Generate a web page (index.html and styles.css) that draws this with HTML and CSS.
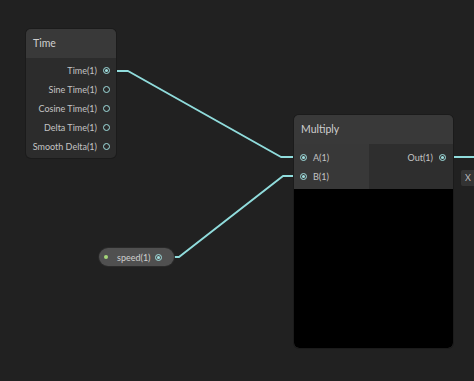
FILE: index.html
```html
<html>
<head>
<meta name="viewport" content="width=device-width, initial-scale=1">
<title>Shader Graph</title>
<link rel="stylesheet" href="styles.css">
</head>
<body>
<div class="canvas">
  <svg class="wires" width="474" height="381" viewBox="0 0 474 381">
    <path d="M110 71 H128 L281 157 H300" />
    <path d="M161 257 H179 L283 176 H300" />
    <path d="M446 157 H474" />
  </svg>

  <div class="node time-node">
    <div class="node-title">Time</div>
    <div class="node-body">
      <div class="slot out"><span>Time(1)</span><i class="port on"></i></div>
      <div class="slot out"><span>Sine Time(1)</span><i class="port"></i></div>
      <div class="slot out"><span>Cosine Time(1)</span><i class="port"></i></div>
      <div class="slot out"><span>Delta Time(1)</span><i class="port"></i></div>
      <div class="slot out"><span>Smooth Delta(1)</span><i class="port"></i></div>
    </div>
  </div>

  <div class="node multiply-node">
    <div class="node-title">Multiply</div>
    <div class="slots">
      <div class="inputs">
        <div class="slot in"><i class="port on"></i><span>A(1)</span></div>
        <div class="slot in"><i class="port on"></i><span>B(1)</span></div>
      </div>
      <div class="outputs">
        <div class="slot out"><span>Out(1)</span><i class="port on"></i></div>
      </div>
    </div>
    <div class="preview"></div>
  </div>

  <div class="property">
    <i class="dot"></i><span>speed(1)</span><i class="port on"></i>
  </div>

  <div class="stub">X</div>
</div>
</body>
</html>
```

FILE: styles.css
```css
html, body {
  margin: 0;
  padding: 0;
  background: #212121;
  overflow: hidden;
}

.canvas {
  position: relative;
  width: 474px;
  height: 381px;
  font-family: Lato, "Noto Sans", sans-serif;
  font-size: 9px;
  color: #c4c4c4;
  white-space: nowrap;
}

.wires {
  position: absolute;
  left: 0;
  top: 0;
}

.wires path {
  fill: none;
  stroke: #90dcdc;
  stroke-width: 2;
  stroke-linejoin: round;
}

.node {
  position: absolute;
  background: #2c2c2c;
  border-radius: 5px;
  box-shadow: 0 0 0 1px #1b1b1b;
  overflow: hidden;
}

.node-title {
  height: 29px;
  line-height: 29px;
  padding-left: 7px;
  background: #393939;
  font-size: 10.5px;
  color: #cfcfcf;
}

.time-node {
  left: 26px;
  top: 29px;
  width: 90px;
  height: 129px;
}

.time-node .node-body {
  padding-top: 3px;
}

.slot {
  display: flex;
  align-items: center;
  height: 19px;
  gap: 6px;
}

.slot.out {
  justify-content: flex-end;
  padding-right: 6px;
}

.slot.in {
  padding-left: 6px;
}

.port {
  flex-shrink: 0;
  display: inline-flex;
  align-items: center;
  justify-content: center;
  box-sizing: border-box;
  width: 7px;
  height: 7px;
  border: 1.5px solid #9fdede;
  border-radius: 50%;
}

.port.on::after {
  content: "";
  width: 3px;
  height: 3px;
  border-radius: 50%;
  background: #9fdede;
}

.multiply-node {
  left: 294px;
  top: 115px;
  width: 159px;
  height: 233px;
  display: flex;
  flex-direction: column;
}

.slots {
  display: flex;
  height: 45px;
}

.inputs {
  width: 75px;
  padding-top: 4px;
  background: #383838;
}

.outputs {
  flex: 1;
  padding-top: 4px;
  background: #2e2e2e;
}

.outputs .slot.out {
  padding-right: 7px;
}

.preview {
  flex: 1;
  background: #000;
  border-radius: 0 0 5px 5px;
}

.property {
  position: absolute;
  left: 99px;
  top: 248px;
  width: 75px;
  height: 18px;
  box-sizing: border-box;
  padding-left: 5px;
  display: flex;
  align-items: center;
  background: #505050;
  border-radius: 9px;
  box-shadow: 0 0 0 1px #2a2a2a;
}

.property span {
  margin: 0 4px 0 9px;
  color: #cfcfcf;
}

.dot {
  flex-shrink: 0;
  width: 4px;
  height: 4px;
  border-radius: 50%;
  background: #a6d77a;
}

.stub {
  position: absolute;
  left: 461px;
  top: 170px;
  width: 20px;
  height: 16px;
  line-height: 16px;
  padding-left: 4px;
  background: #333;
  border-radius: 2px;
  color: #bbb;
}
```
